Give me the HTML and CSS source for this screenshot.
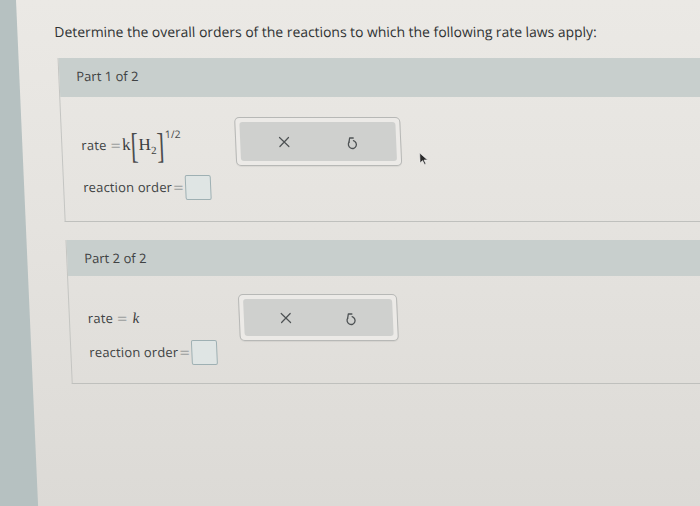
FILE: index.html
```html
<!DOCTYPE html>
<html>
<head>
<meta charset="utf-8">
<link rel="stylesheet" href="styles.css">
</head>
<body>
<div class="page">
  <p class="prompt">Determine the overall orders of the reactions to which the following rate laws apply:</p>

  <section class="panel panel-first">
    <div class="panel-head">Part 1 of 2</div>
    <div class="panel-body">
      <div class="eqs">
        <div class="eq eq-tall">
          <span class="word">rate</span>
          <span class="eqsign">=</span>
          <span class="mk">k</span>
          <span class="brk">[</span>
          <span class="mh">H<sub>2</sub></span>
          <span class="brk">]</span>
          <sup class="pow">1/2</sup>
        </div>
        <div class="eq">
          <span class="word">reaction order</span>
          <span class="eqsign tight">=</span>
          <span class="answer"></span>
        </div>
      </div>
      <div class="tools">
        <div class="tools-inner">
          <svg class="ico" viewBox="0 0 12 12" width="12" height="12"><path d="M1.5 1.5 L10.5 10.5 M10.5 1.5 L1.5 10.5" stroke="#4e5254" stroke-width="1.2" fill="none" stroke-linecap="round"/></svg>
          <svg class="ico undo" viewBox="0 0 12 14" width="12" height="14"><path d="M2.8 6.2 A4 4 0 1 0 7.3 4.7" stroke="#4e5254" stroke-width="1.3" fill="none" stroke-linecap="round"/><path d="M7.2 2 L3.6 2 L2.8 6.2" stroke="#4e5254" stroke-width="1.3" fill="none" stroke-linecap="round" stroke-linejoin="round"/></svg>
        </div>
      </div>
      <svg class="cursor" viewBox="0 0 10 14" width="10" height="14"><path d="M1 1 L1 11 L3.5 8.6 L5.4 12.6 L6.8 12 L5 8 L8.6 8 Z" fill="#2a2a2a" stroke="#f0f0f0" stroke-width="0.6"/></svg>
    </div>
  </section>

  <section class="panel panel-second">
    <div class="panel-head">Part 2 of 2</div>
    <div class="panel-body">
      <div class="eqs">
        <div class="eq">
          <span class="word">rate</span>
          <span class="eqsign">=</span>
          <span class="mk italic">k</span>
        </div>
        <div class="eq">
          <span class="word">reaction order</span>
          <span class="eqsign tight">=</span>
          <span class="answer"></span>
        </div>
      </div>
      <div class="tools">
        <div class="tools-inner">
          <svg class="ico" viewBox="0 0 12 12" width="12" height="12"><path d="M1.5 1.5 L10.5 10.5 M10.5 1.5 L1.5 10.5" stroke="#4e5254" stroke-width="1.2" fill="none" stroke-linecap="round"/></svg>
          <svg class="ico undo" viewBox="0 0 12 14" width="12" height="14"><path d="M2.8 6.2 A4 4 0 1 0 7.3 4.7" stroke="#4e5254" stroke-width="1.3" fill="none" stroke-linecap="round"/><path d="M7.2 2 L3.6 2 L2.8 6.2" stroke="#4e5254" stroke-width="1.3" fill="none" stroke-linecap="round" stroke-linejoin="round"/></svg>
        </div>
      </div>
    </div>
  </section>
</div>
</body>
</html>
```

FILE: styles.css
```css
html, body {
  margin: 0;
  padding: 0;
}
body {
  width: 700px;
  height: 506px;
  overflow: hidden;
  background: #b6c1c1;
  font-family: "Open Sans", "DejaVu Sans", sans-serif;
  color: #3b3d3e;
}
.page {
  margin-left: 16px;
  height: 506px;
  width: 760px;
  transform: skewX(2.5deg);
  transform-origin: 0 0;
  background: linear-gradient(180deg, #ebe9e5 0%, #e5e3df 45%, #dcdad6 100%);
  padding-top: 22px;
  box-sizing: border-box;
}
.prompt {
  margin: 0 0 16px 37px;
  font-size: 13.9px;
  line-height: 20px;
  color: #2f3233;
}
.panel {
  margin-left: 39px;
  width: 740px;
  border-left: 1px solid #c4c5c2;
  border-bottom: 1px solid #bfc0bd;
}
.panel-second {
  margin-top: 18px;
}
.panel-head {
  background: #c8cfcd;
  height: 39px;
  line-height: 37px;
  padding-left: 17px;
  font-size: 13px;
  color: #3f4243;
}
.panel-second .panel-head {
  height: 36px;
  line-height: 36px;
}
.panel-body {
  position: relative;
  display: flex;
  align-items: flex-start;
  padding: 20px 0 22px 19px;
}
.panel-second .panel-body {
  padding: 18px 0 19px 18px;
}
.eqs {
  width: 154px;
  display: flex;
  flex-direction: column;
  gap: 11px;
  padding-top: 9px;
}
.panel-second .eqs {
  width: 151px;
  padding-top: 12px;
  gap: 10px;
}
.eq {
  display: flex;
  align-items: center;
  height: 24px;
  font-size: 13px;
  color: #404344;
  white-space: nowrap;
}
.eq-tall {
  height: 38px;
}
.word {
  letter-spacing: 0.15px;
}
.eqsign {
  color: #9a9d9d;
  margin: 0 1px 0 5px;
  font-size: 15px;
  transform: scaleX(1.2);
}
.eqsign.tight {
  margin: 0 2px 0 2px;
}
.mk {
  font-family: "Liberation Serif", "DejaVu Serif", serif;
  font-size: 17px;
  color: #3a3c3d;
  margin-left: 1px;
}
.mk.italic {
  font-style: italic;
  font-size: 15px;
  margin-left: 5px;
}
.brk {
  font-family: "Liberation Serif", serif;
  font-size: 36px;
  line-height: 30px;
  color: #4a4c4d;
  transform: scaleX(0.62);
  margin: 0 -2px;
  position: relative;
  top: 1px;
}
.mh {
  font-family: "Liberation Serif", serif;
  font-size: 17px;
  color: #3a3c3d;
}
.mh sub {
  font-size: 11px;
  vertical-align: -4px;
}
.pow {
  align-self: flex-start;
  font-size: 10.5px;
  margin-top: 1px;
  margin-left: 1px;
  color: #4a4c4d;
}
.answer {
  display: inline-block;
  width: 24px;
  height: 23px;
  border: 1.5px solid #9eb0b3;
  border-radius: 2px;
  background: #dfe5e4;
}
.tools {
  width: 166px;
  height: 49px;
  box-sizing: border-box;
  border: 1.5px solid #b7b8b6;
  border-radius: 5px;
  background: #eceae7;
  padding: 4px;
  box-shadow: 0 1px 1px rgba(0,0,0,0.06);
}
.panel-second .tools {
  width: 159px;
  height: 47px;
}
.tools-inner {
  height: 100%;
  background: #cfd0ce;
  border-radius: 3px;
  display: flex;
  align-items: center;
  justify-content: space-around;
  padding: 0 10px;
}
.ico {
  display: block;
}
.undo {
  margin-top: 2px;
}
.cursor {
  position: absolute;
  left: 356px;
  top: 55px;
}
```
